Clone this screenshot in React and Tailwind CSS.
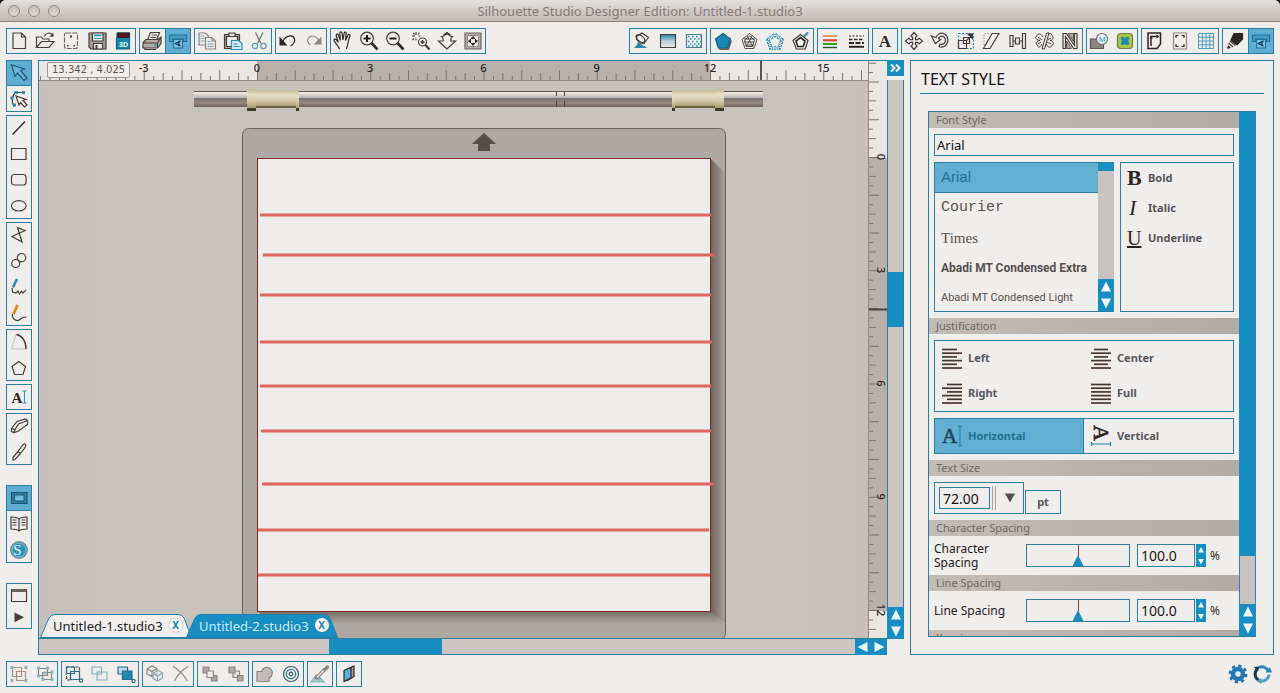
import { useState } from 'react';

const Icon = ({ children }) => (
    <svg viewBox="0 0 26 26" className="size-[26px] block" fill="none" stroke="currentColor" strokeWidth="1.2" aria-hidden="true">
        {children}
    </svg>
);

const BLUE = '#2b8fb4';
const DARK = '#463d3a';

const icons = {
    /* top toolbar */
    newDoc: <Icon><path d="M7 5h8.5l4 4v11.5H7zM15.5 5v4h4" /></Icon>,
    open: <Icon><path d="M4.500 19.500V9h5l1.500 2h6v3M4.500 19.500l5-6H22l-5 6zM12 8.500c2-3.500 6-4.500 8.500-2" /><path d="M21.500 4.500v4.200h-4z" fill={DARK} stroke="none" /></Icon>,
    template: <Icon><rect x="6.500" y="5" width="13" height="15.500" rx="1.500" stroke="#6f6764" strokeDasharray="5 1.2" /><path d="M12 7.500h2v2h-2zM9 17h1.500v1.500H9zM15.500 17H17v1.500h-1.500z" fill={DARK} stroke="none" /></Icon>,
    save: <Icon><path d="M5 5h17v16H7l-2-2z" fill="#a39c98" /><path d="M8.500 5h10.500v8H8.500z" fill="#eef4f5" /><path d="M10 6.500h7.500v1.800H10z" fill={BLUE} stroke="none" /><path d="M10 10.500h7.500" stroke={BLUE} /><path d="M9.500 15.500h9V21h-9z" fill="#eee" /><path d="M11.500 17h2v4h-2z" fill={DARK} stroke="none" /></Icon>,
    sd: <Icon><path d="M7 5h12.500v16H6.500V10L7 9z" fill="#1585ab" stroke="#17617c" /><path d="M8 5h11v4.500H8z" fill="#5d1820" stroke="#3a1c20" /><text x="13.500" y="18.500" fontSize="7" fontWeight="700" textAnchor="middle" fill="#e8fbff" stroke="none" fontFamily="Liberation Sans, sans-serif">3D</text></Icon>,
    print: <Icon><path d="M8.500 12l3-7.500h9l-3 7.500" fill="#f5f3f1" /><path d="M12.500 7h5.500M11.500 9.500h5.500" /><path d="M4 15l3-3.500h12l3-2.500v6.500L18.500 20H4z" fill="#b5aca6" /><path d="M4 15h14.500l3.500-5M18.500 15v5M6 20v1.500h11" /><path d="M15 17.200h3" stroke={BLUE} strokeWidth="1.6" /></Icon>,
    cutter: <Icon><path d="M4.500 7h17v6.500h-3V11h-11v2.500h-3z" fill="#4a9cc2" stroke="#20739a" /><path d="M8.500 11.500h9V20h-9z" fill="#7fc3e2" stroke="#20739a" /><path d="M15.500 12.800L10.500 15.500l5 2.700M14 13.800v3.500" stroke="#123f57" strokeWidth="1.4" /></Icon>,
    copy: <Icon><g stroke="#8d8683"><path d="M5 5h6.500l3 3v9H5z" fill="#eceae8" /><path d="M6.500 8h4M6.500 10.500h6M6.500 13h6" stroke="#86a9b5" /><path d="M11.500 9.500h6.500l3.500 3.500v8h-10z" fill="#eceae8" /><path d="M18 9.500v3.500h3.500" /><path d="M13.500 13.500h3M13.500 16h6M13.500 18.500h6" stroke="#86a9b5" /></g></Icon>,
    paste: <Icon><path d="M4.500 6.500h15v14h-15z" fill="#a9a19c" /><path d="M6.500 8.500h11v10h-11z" fill="#efedec" /><path d="M9 5h6v3.500H9z" fill="#efedec" /><path d="M11.500 12.500h7l3.500 3v6H11.500z" fill="#d4eef5" stroke={BLUE} /><path d="M13.500 16h4M13.500 18.500h6" stroke={BLUE} /></Icon>,
    scissors: <Icon><path d="M9.500 4.500l5.500 11M17 4.500l-5.500 11" stroke="#6f6764" /><circle cx="9" cy="18" r="2.700" stroke="#5d9cb4" /><circle cx="17.500" cy="18" r="2.700" stroke="#5d9cb4" /></Icon>,
    undo: <Icon><path d="M8 13.500c2-6 10-7.500 11.500-2.500.8 3-1.500 5.500-4 7" stroke="#2d2524" /><path d="M4.500 8.500v9h8z" fill="#2d2524" stroke="none" /></Icon>,
    redo: <Icon><path d="M18 13.500c-2-6-9-7-11-3-1.300 3 .5 5 2.500 6.500" stroke="#8d8785" /><path d="M20.500 8.500v8h-8z" fill="#8d8785" stroke="none" /></Icon>,
    hand: <Icon><path d="M9.500 21c-1-3-4.500-6-5.500-8.500-.3-1.500 1.500-1.800 2.300-.7l2 2.700L6.200 7.500c-.3-1.500 1.600-2 2.100-.6l2 5.600L9.800 5c0-1.500 2-1.500 2.200 0l1 7 1.200-7c.3-1.400 2.200-1.100 2 .4l-.7 7.100 2.500-5.500c.7-1.300 2.300-.5 1.900.8-1 3.500-1.700 5.200-2 7.700-.2 2-1 3.500-1.400 5.500" stroke="#2f2928" /></Icon>,
    zoomIn: <Icon><circle cx="11" cy="10.500" r="6.300" /><path d="M15.500 15l6 6.500" strokeWidth="2.600" stroke="#332a28" /><path d="M11 7v7M7.500 10.500h7" strokeWidth="2" stroke="#1f1918" /></Icon>,
    zoomOut: <Icon><circle cx="11" cy="10.500" r="6.300" /><path d="M15.500 15l6 6.500" strokeWidth="2.600" stroke="#332a28" /><path d="M7.500 10.500h7" strokeWidth="2" stroke="#1f1918" /></Icon>,
    zoomArea: <Icon><path d="M8 4v3M4 8h3M5 5l1.500 1.500M12.500 8h-2M8 10.500v2M11.500 4.500L10 6.500M4.500 12L6 10.500" /><circle cx="14.500" cy="14" r="4" /><path d="M14.500 12v4M12.500 14h4" strokeWidth="1.600" /><path d="M17.500 17l4 4.500" strokeWidth="2.200" /></Icon>,
    zoomDrag: <Icon><path d="M13 21l-8.500-8h4.800C9.500 11 9 9.500 7.500 8.500L10 8c1-2.500 5-2.500 6 0l2.500.5c-1.500 1-2 2.500-1.800 4.500h4.800zM9.500 7l3.500-2.500L16.500 7" /></Icon>,
    fit: <Icon><path d="M5 5h16v16H5z" fill="#b5aeaa" stroke="#6d6461" /><path d="M7.500 7.500h11v11h-11z" fill="#efedec" stroke="#8d8683" strokeWidth="1" /><path d="M13 8l2.500 3h-5zM13 18l2.500-3h-5zM8 13l3-2.500v5zM18 13l-3-2.500v5z" fill="#2d2524" stroke="none" /></Icon>,
    fill: <Icon><path d="M7.500 8.500L13 5l6.500 4.500-4.500 6c-3 .5-8-2.500-7.500-7z" /><ellipse cx="11.500" cy="10.500" rx="5" ry="2.800" transform="rotate(40 11.500 10.500)" /><path d="M9 13.500c-.5 3-2 4.500-4 6.500h12.500c.5-1.500-2.500-2-4-2.500-1.500-.8-1.500-2-1.500-3z" fill="#2b86a3" stroke="none" /></Icon>,
    gradient: <Icon><defs><linearGradient id="fillGradient" x1="0" x2="0" y1="0" y2="1"><stop offset="0" stopColor="#1b86ad" /><stop offset="0.5" stopColor="#b9cdd2" /><stop offset="1" stopColor="#eceae8" /></linearGradient></defs><path d="M5.500 6.500h15v13h-15z" fill="url(#fillGradient)" /></Icon>,
    pattern: <Icon><path d="M5.500 6.500h15v13h-15z" stroke="#4b7f92" /><path d="M7 8.500h13M7 13.500h13M7 18h13" stroke={BLUE} strokeWidth="1.600" strokeDasharray="1.600 2.400" /><path d="M9 11h10M9 16h10" stroke={BLUE} strokeWidth="1.600" strokeDasharray="1.600 2.400" /></Icon>,
    pentSolid: <Icon><path d="M14 7l8 6-3 9h-9.500l-3.500-9z" fill="#6c6562" stroke="none" /><path d="M13 5.500l7.500 5.500-2.800 9H8.300L5.500 11z" fill="#1588b5" stroke="#17617c" /></Icon>,
    pentSketch: <Icon><path d="M13.500 5.500l7.500 6-3 9H9l-3-9zM13.500 8l5 4-2 6.500h-6l-2-6.500zM8 11h11M8 14h10M9 17h9M11 8l6 11M16 8l-6 11" strokeWidth="0.900" /></Icon>,
    pentDots: <Icon><path d="M13 6.500l7 5.500-2.700 8H8.700L6 12z" stroke={BLUE} strokeWidth="3.600" strokeDasharray="2.400 1" /><path d="M13 6.500l7 5.500-2.700 8H8.700L6 12z" stroke="#eef3f4" strokeWidth="1.600" strokeDasharray="1.400 2" strokeDashoffset="-0.500" /></Icon>,
    pentPen: <Icon><path d="M12.500 6.500l7.500 6-2.800 8.500H8.300L5 12.500z" /><path d="M12.500 9.500l4.500 3.500-1.700 5.500H9.700L8 13z" fill="#f4f2f1" strokeWidth="1.600" stroke="#2d2524" /><path d="M16 8.500l4-4" stroke={BLUE} strokeWidth="2.200" /></Icon>,
    lineColor: <Icon><path d="M6 8h14" stroke="#d98b3c" strokeWidth="1.600" /><path d="M6 12.300h14" stroke="#d5483d" strokeWidth="2.200" /><path d="M6 16h14" stroke="#28a428" strokeWidth="2" /><path d="M6 19.500h14" stroke="#1f5f27" strokeWidth="1.400" /></Icon>,
    lineStyle: <Icon><g stroke="#2d2524"><path d="M6 8h15" strokeDasharray="2 1.500" /><path d="M6 11.500h15" strokeDasharray="3.500 1.500" strokeWidth="1.600" /><path d="M6 15h15" strokeDasharray="5 1.500" strokeWidth="1.800" /><path d="M6 18.800h15" strokeWidth="2" /></g></Icon>,
    textA: <Icon><text x="13" y="19" textAnchor="middle" fontSize="17" fontWeight="700" fontFamily="Liberation Serif, serif" fill="#2d2524" stroke="none">A</text></Icon>,
    move: <Icon><path d="M13 4.500l3 3.500-1.600 1.200V11.600h2.400L18 10l3.500 3L18 16l-1.200-1.600h-2.400v2.400L16 18l-3 3.500L10 18l1.600-1.200v-2.400H9.200L8 16l-3.500-3L8 10l1.200 1.600h2.400V9.200L10 8z" /></Icon>,
    rotate: <Icon><path d="M9 9.500C10 6 14 4 17.500 6c4 2.300 4.500 8 1.500 11-2 2-4.500 2.500-7 1.700l1-2.500c2 .6 4 0 5-1.800 1.200-2.200.3-5-2-6-2-.8-4 .2-4.600 2.200l2.400.9-5.500 4L4.500 8z" /></Icon>,
    scale: <Icon><path d="M5.500 5.500h15v15h-15z" stroke={BLUE} strokeDasharray="2 1.500" /><path d="M5.500 12.500h8v8h-8zM10.500 9.500h6v6h-6z" stroke={DARK} /><path d="M13 13l6-6M19.500 10.500V6h-4.500z" stroke={DARK} fill={DARK} /></Icon>,
    shear: <Icon><path d="M13 5.500h7L11 20.500H4.500z" /><path d="M13 5.500H5v15" stroke="#a9a3a0" strokeDasharray="1.500 1.500" /></Icon>,
    align: <Icon><path d="M5 7.500h3v11H5zM10.500 10h4v6h-4zM17.500 5.500h3v15h-3zM8 13h2.500M14.500 13h3" /></Icon>,
    replicate: <Icon><path d="M11 21l4.500-16h2.500L13.500 21zM12 9C10 5 6.500 5 6 8c-3 1-1 4 3 4.500C4.500 13 4 16 6.500 17c0 3 3 3 4.500-1M15 16c2 4 5.500 4 6 1 3-1 1-4-2-4.500 3.500-.5 4-3.500 2-4.500 0-2.500-2-3.500-3.500-1M7 9l4 3M7 16l3-2M20 10l-3 1.500M20 16l-4-2" strokeWidth="1" /></Icon>,
    nest: <Icon><path d="M6 5.500h3.500l8 12v-12H20v15h-3.500l-8-12v12H6z" /><path d="M11 5.500h5.500v8zM9.500 13v7.500h5z" fill="#a8a19e" strokeWidth="0.800" /></Icon>,
    modify: <Icon><path d="M4.500 11h13v9.500h-13z" fill="#8d8582" stroke="#5d5552" /><circle cx="16" cy="11" r="5.500" fill="#edf6f8" stroke="#6f6b69" /><text x="16" y="14" textAnchor="middle" fontSize="8" fontFamily="Liberation Sans, sans-serif" fill={BLUE} stroke="none">M</text></Icon>,
    offset: <Icon><rect x="5.500" y="5.500" width="15" height="15" rx="3" fill="#a7c63e" stroke="#6d7f4f" /><path d="M9 9h2.500l1.500 1 1.500-1H17v2.500L16 13l1 1.500V17h-2.500L13 16l-1.500 1H9v-2.500l1-1.500-1-1.500z" fill="#1e88b4" stroke="none" /></Icon>,
    page: <Icon><path d="M7 5h12.500v11L16 20.500H7z" strokeWidth="1.500" stroke="#2d2524" /><path d="M10 18V8.500h6.500" strokeWidth="1.500" stroke="#2d2524" /><path d="M8.500 10.500L10 7.500l2 3zM15.500 6.500l3 2-3 2z" fill="#2d2524" stroke="none" /></Icon>,
    regMarks: <Icon><path d="M6.500 5h13v16h-13z" stroke="#8d8582" /><path d="M9 10V7.500h2.500M14.500 7.500H17V10M9 16v2.500h2.500M14.500 18.500H17V16" stroke="#2d2524" strokeWidth="1.200" /></Icon>,
    grid: <Icon><path d="M5.500 5.500h15v15h-15zM9.300 5.500v15M13 5.500v15M16.800 5.500v15M5.500 9.300h15M5.500 13h15M5.500 16.800h15" stroke="#4b9fbd" strokeWidth="1" /></Icon>,
    blade: <Icon><path d="M12 5.500h8.500V11l-5.500 6-6-5z" fill="#2d2524" stroke="#2d2524" /><path d="M8 13l5.500 4.500M6.500 15l4.500 4" stroke="#4a403c" strokeWidth="1.500" /><path d="M6 17l3 3-4 .8z" fill="#2d2524" stroke="none" /></Icon>,

    /* left toolbar */
    select: <Icon><path d="M5.500 5l3.500 11.500 2.500-3.500 6.500 7.500 3-2.500-6.500-7.500 4-1.500z" stroke="#1f5573" fill="#6db5d6" /></Icon>,
    editPoints: <Icon><path d="M8 21C5 15 6 9 10 6.500h8" stroke={DARK} /><path d="M8.500 5h3.500v3H8.500zM16 5h3v3h-3zM4.500 10.500h3v3h-3zM7 17.500h3v3H7z" fill={BLUE} stroke="none" /><path d="M10 10l3 9 1.500-2.500 4 4.500 2.500-2-4-4.500 3-1z" fill="#f4f2f1" /></Icon>,
    line: <Icon><path d="M6.500 19.500L19 6.500" stroke="#2d2524" strokeWidth="1.400" /></Icon>,
    rect: <Icon><path d="M5.500 7.500h14.500v11H5.500z" /></Icon>,
    roundRect: <Icon><rect x="5.500" y="7.500" width="14.500" height="10.500" rx="2.800" /></Icon>,
    ellipse: <Icon><ellipse cx="12.800" cy="12.800" rx="7.300" ry="5.200" /></Icon>,
    polygon: <Icon><path d="M11.500 5.500l7.500 3L6 14.500l10 5.500z" /></Icon>,
    curve: <Icon><circle cx="15.500" cy="9.700" r="4.200" /><circle cx="9.700" cy="15.500" r="4" /></Icon>,
    freehand: <Icon><path d="M11 5l-4 8.500" stroke={BLUE} strokeWidth="2.600" /><path d="M6 14l.5 4 3.500 1 2-2 1.500 3 2-2.500 1.500 1.500 3-3" stroke={DARK} /></Icon>,
    smooth: <Icon><path d="M11.500 5l-4 9" stroke="#d98a1e" strokeWidth="2.800" /><path d="M6.500 14v3c2 4 5.500 4.500 8 2 1.500-1.500 3-2 6-2" stroke={DARK} /></Icon>,
    arc: <Icon><path d="M10 5.500L5.500 20H20" stroke="#c4bfbc" strokeWidth="1" /><path d="M10.500 5.500C16 6.500 20 12 20 20" strokeWidth="1.500" /></Icon>,
    regPolygon: <Icon><path d="M12.800 6.500l6.700 5-2.500 8h-8.500l-2.500-8z" /></Icon>,
    textTool: <Icon><text x="11" y="18.500" textAnchor="middle" fontSize="15" fontWeight="700" fontFamily="Liberation Serif, serif" fill="#2d2524" stroke="none">A</text><path d="M16.500 7h4M18.500 7v12M16.500 19h4" stroke={BLUE} strokeWidth="1" /></Icon>,
    eraser: <Icon><path d="M5.500 15.500L11 8.500l8.500-2.500 2 1.500v4L12.500 18 8 19.500l-2.500-1zM5.500 15.500l3.500 1 3.500-5.500 9-3.500M9 16.500l-.8 3" /></Icon>,
    knife: <Icon><path d="M19 5c1.500 1 .5 3-1 5l-3.500 4.500-2.500-2L15.500 7.500C16.500 6 18 4.500 19 5zM12 12.500L7 18.500v2.500l2-.5 5.500-6" /></Icon>,
    docView: <Icon><path d="M5.500 7.500h15.500v11H5.500z" fill="#2e7fa6" stroke="#1d5775" /><path d="M8.500 10h9.500v6H8.500z" fill="#77bede" stroke="#1d5775" strokeWidth="1" /></Icon>,
    book: <Icon><path d="M13 8c-2-2-5-2-8-2v12c3 0 6 0 8 2 2-2 5-2 8-2V6c-3 0-6 0-8 2zM13 8v12M6.500 9h4M6.500 11.500h4M6.500 14h4M15.500 9h4M15.500 11.500h4M15.500 14h4" /></Icon>,
    store: <Icon><circle cx="13" cy="13" r="8.300" fill="#2a93b8" stroke="#75848a" /><circle cx="13" cy="13" r="7" stroke="#bfe3ee" strokeWidth="0.600" /><text x="11.500" y="18" textAnchor="middle" fontSize="15" fontFamily="Liberation Serif, serif" fill="#eafaff" stroke="none">S</text></Icon>,
    windowPane: <Icon><path d="M5.500 6.500h15v12h-15z" /><path d="M5.500 7.500h15" strokeWidth="3" stroke="#6b6360" /></Icon>,
    play: <Icon><path d="M8.500 6.500l9.500 4.800-9.500 4.900z" fill="#463d3a" stroke="none" /></Icon>,

    /* bottom toolbar */
    group: <Icon><path d="M6.500 6.500h9v9h-9zM10.500 10.500h9v9h-9z" stroke="#a39389" /><path d="M4.500 5h3v3h-3zM18.500 5h3v3h-3zM4.500 18h3v3h-3zM18.500 18h3v3h-3z" fill="#8fb3be" stroke="none" /></Icon>,
    ungroup: <Icon><path d="M6.500 7.500h9v7h-9zM10.500 11.500h9v7h-9z" stroke="#8d8683" /><path d="M5 5.500h3v3H5zM14 5.500h3v3h-3zM5 13.500h3v3H5zM18.500 9.500h3v3h-3zM9.500 17h3v3h-3zM18.500 17h3v3h-3zM11.500 10.500h3v3h-3z" fill="#8fb3be" stroke="none" /></Icon>,
    selectAll: <Icon><path d="M5.500 6v13h6M5.500 6h13v5" stroke={DARK} strokeDasharray="3 1.500" /><path d="M5.500 6h8v6.500h-8zM9.500 10.500h9v8h-9z" stroke="#276f88" /><circle cx="20" cy="19.500" r="1.700" stroke="#276f88" /></Icon>,
    deselect: <Icon><path d="M5 6h9.500v7H5zM10 11h10v8H10z" fill="#efedec" stroke="#8badb8" /></Icon>,
    invert: <Icon><path d="M5 6h9.500v7H5z" fill="#bcdce6" stroke="#276f88" /><path d="M9.500 10h9.500v8.500H9.500z" fill="#1c8ab4" stroke="#276f88" /><circle cx="20.500" cy="20" r="1.600" stroke="#276f88" /></Icon>,
    duplicate: <Icon><g fill="#efedec" stroke="#8d8683"><path d="M5 8l5-3 5 2.500v5l-5 3-5-2.500zM5 8l5 2.500 5-3M10 10.500v5" /><path d="M11 12.500l5-3 4.500 2.500v5l-5 3-4.500-2.500zM11 12.500l4.500 2.500 5-3M15.500 15v5" stroke="#8ba7b1" /></g></Icon>,
    deleteX: <Icon><path d="M5 5.500c6 3 11 9 14.500 14.500M20 5.500C14 9 9 14.500 6.500 20" stroke="#8d8683" /></Icon>,
    bringFront: <Icon><path d="M6 6h6v6H6zM14.500 14.500h5.500v5.500h-5.500z" fill="#b0a9a5" stroke="#8d8683" /><path d="M10 10h6.500v6.500H10z" fill="#efedec" stroke="#8d8683" /></Icon>,
    sendBack: <Icon><path d="M10 10h6.500v6.500H10z" fill="#e4e1df" stroke="#8d8683" /><path d="M6 6h6v6H6zM14.500 14.500h5.500v5.500h-5.500z" fill="#b0a9a5" stroke="#8d8683" /></Icon>,
    weld: <Icon><path d="M5 10.500h4.500a5.500 5.500 0 1 1 7.500 6.500v3.500H5z" fill="#c3bdb9" stroke="#8d8683" /></Icon>,
    spiral: <Icon><circle cx="13" cy="13" r="7.500" stroke="#37596a" /><circle cx="13" cy="13" r="4.700" stroke="#2d7894" /><circle cx="13" cy="13" r="1.800" stroke="#37596a" /></Icon>,
    eyedropper: <Icon><path d="M4 21l5-7 3 4.500 1-2 4 4.500z" fill="#9ccbdc" stroke="#8badb8" /><path d="M9.500 17l8-8.500M19 7.500l1.500-1.500" stroke="#8d8683" strokeWidth="3.500" strokeLinecap="round" /><path d="M10 16.500l6.500-7" stroke="#e4e1df" strokeWidth="1.400" /></Icon>,
    layers: <Icon><path d="M11.500 8l6.500-3v10.500l-6.500 4z" fill="#a39c98" stroke="#2d2524" /><path d="M8 9.500l7-3v10.500L8 20.500z" fill="#5ab4d8" stroke="#2d2524" /></Icon>,
};

const topLeft = [
    [['New', 'newDoc'], ['Open', 'open'], ['Open template', 'template'], ['Save', 'save'], ['Save to SD card', 'sd']],
    [['Print', 'print'], ['Send to Silhouette', 'cutter', true]],
    [['Copy', 'copy'], ['Paste', 'paste'], ['Cut', 'scissors']],
    [['Undo', 'undo'], ['Redo', 'redo']],
    [['Pan', 'hand'], ['Zoom in', 'zoomIn'], ['Zoom out', 'zoomOut'], ['Zoom selection', 'zoomArea'], ['Drag zoom', 'zoomDrag'], ['Fit to window', 'fit']],
];

const topRight = [
    [['Fill colour', 'fill'], ['Fill gradient', 'gradient'], ['Fill pattern', 'pattern']],
    [['Shadow', 'pentSolid'], ['Sketch', 'pentSketch'], ['Rhinestones', 'pentDots'], ['Trace', 'pentPen']],
    [['Line colour', 'lineColor'], ['Line style', 'lineStyle']],
    [['Text style', 'textA']],
    [['Move', 'move'], ['Rotate', 'rotate'], ['Scale', 'scale'], ['Shear', 'shear'], ['Align', 'align'], ['Replicate', 'replicate'], ['Nesting', 'nest']],
    [['Modify', 'modify'], ['Offset', 'offset']],
    [['Design page settings', 'page'], ['Registration marks', 'regMarks'], ['Grid settings', 'grid']],
    [['Cut settings', 'blade'], ['Cut window', 'cutter', true]],
];

const sideTools = [
    [['Select', 'select', true], ['Edit points', 'editPoints']],
    [['Line', 'line'], ['Rectangle', 'rect'], ['Rounded rectangle', 'roundRect'], ['Ellipse', 'ellipse']],
    [['Polygon', 'polygon'], ['Curve', 'curve'], ['Freehand', 'freehand'], ['Smooth freehand', 'smooth']],
    [['Arc', 'arc'], ['Regular polygon', 'regPolygon']],
    [['Text', 'textTool']],
    [['Eraser', 'eraser'], ['Knife', 'knife']],
];

const viewTools = [[['Drawing area', 'docView', true], ['Library', 'book'], ['Store', 'store']]];

const bottomTools = [
    [['Group', 'group'], ['Ungroup', 'ungroup']],
    [['Select all', 'selectAll'], ['Deselect all', 'deselect'], ['Select by colour', 'invert']],
    [['Duplicate', 'duplicate'], ['Delete', 'deleteX']],
    [['Bring to front', 'bringFront'], ['Send to back', 'sendBack']],
    [['Weld', 'weld'], ['Offset rings', 'spiral']],
    [['Eyedropper', 'eyedropper']],
    [['Layers', 'layers']],
];

const ToolGroups = ({ groups, vertical }) => (
    <div className={vertical ? 'flex flex-col gap-[3px]' : 'flex gap-[3px]'}>
        {groups.map((group) => (
            <div
                key={group[0][0]}
                className={`flex shadow-[inset_0_0_0_1px_#2f7f9b] ${vertical ? 'flex-col' : ''}`}
            >
                {group.map(([label, icon, active]) => (
                    <button
                        key={label}
                        type="button"
                        aria-label={label}
                        className={`size-[26px] text-[#463d3a] ${active ? 'bg-[#5fadd2] shadow-[inset_0_0_0_1px_#2f7f9b]' : ''}`}
                    >
                        {icons[icon]}
                    </button>
                ))}
            </div>
        ))}
    </div>
);

/* ---------- rulers ---------- */
const UNIT = 37.75;

const tickLength = (i) => (i % 4 === 0 ? 10 : i % 2 === 0 ? 7 : 4);

const range = (from, to) => Array.from({ length: to - from + 1 }, (_, i) => from + i);

const TopRuler = () => (
    <div className="h-5 shrink-0 overflow-x-clip bg-[#e9e6e4] border-b border-[#8f8782]">
        <svg width="829" height="19" className="block max-w-none overflow-visible" aria-hidden="true">
            <rect x="218" y="0" width="453" height="19" fill="#b8b0ab" />
            {range(-23, 64).map((i) => (
                <path key={i} d={`M${218.5 + (i * UNIT) / 4} ${19 - tickLength(i)}V19`} stroke="#7b736f" />
            ))}
            {[-3, 0, 3, 6, 9, 12, 15].map((n) => (
                <text key={n} x={218 + n * UNIT} y="11" textAnchor="middle" fontSize="11" fontWeight="500" fill="#2d2624">
                    {n}
                </text>
            ))}
            <path d="M722 0V19" stroke="#5a5350" strokeWidth="2" />
        </svg>
    </div>
);

const SideRuler = () => (
    <div className="w-[19px] shrink-0 overflow-y-clip bg-[#e9e6e4] border-l border-[#8f8782]">
        <svg width="18" height="577" className="block max-w-none overflow-visible" aria-hidden="true">
            <rect x="0" y="97" width="18" height="453" fill="#b8b0ab" />
            {range(-10, 50).map((i) => (
                <path key={i} d={`M0 ${96.5 + (i * UNIT) / 4}H${tickLength(i)}`} stroke="#7b736f" />
            ))}
            {[0, 3, 6, 9, 12].map((n) => (
                <text key={n} transform={`translate(8 ${96 + n * UNIT}) rotate(90)`} textAnchor="middle" fontSize="11" fontWeight="500" fill="#2d2624">
                    {n}
                </text>
            ))}
            <path d="M0 248.500H18" stroke="#4a4340" strokeWidth="2" />
        </svg>
    </div>
);

/* ---------- drawing area ---------- */
const strokes = [
    [221, 672, 134], [224, 676, 174], [221, 672, 214], [221, 673, 261], [221, 672, 305],
    [222, 672, 350], [223, 675, 403], [219, 670, 449], [219, 671, 494],
];

const Roller = ({ x, flip }) => (
    <g transform={flip ? `translate(${x + 52} 0) scale(-1 1)` : `translate(${x} 0)`}>
        <rect x="0" y="26" width="9" height="4" fill="#453a24" />
        <rect x="9" y="9" width="41" height="17" fill="url(#beige)" />
        <rect x="9" y="25" width="41" height="2" fill="#6b5c3c" />
        <rect x="0" y="8" width="9" height="19" fill="url(#beige)" />
        <rect x="49" y="9" width="3" height="19" fill="url(#beige)" />
        <rect x="49" y="27" width="3" height="3" fill="#453a24" />
    </g>
);

const Workspace = () => (
    <svg width="829" height="557" className="block max-w-none" role="img" aria-label="Cutting mat with page">
        <defs>
            <linearGradient id="rod" x1="0" x2="0" y1="0" y2="1">
                <stop offset="0" stopColor="#5d5551" />
                <stop offset="0.08" stopColor="#5d5551" />
                <stop offset="0.09" stopColor="#efecea" />
                <stop offset="0.3" stopColor="#cfc9c5" />
                <stop offset="0.45" stopColor="#b4aca7" />
                <stop offset="0.47" stopColor="#7c726c" />
                <stop offset="0.75" stopColor="#95897f" />
                <stop offset="1" stopColor="#6a605a" />
            </linearGradient>
            <linearGradient id="beige" x1="0" x2="0" y1="0" y2="1">
                <stop offset="0" stopColor="#c4b797" />
                <stop offset="0.3" stopColor="#e9dfc4" />
                <stop offset="0.65" stopColor="#d3c6a6" />
                <stop offset="1" stopColor="#a89873" />
            </linearGradient>
            <linearGradient id="shadeRight" x1="0" x2="1">
                <stop offset="0" stopColor="#6f655f" />
                <stop offset="1" stopColor="#a79f99" />
            </linearGradient>
            <linearGradient id="shadeBottom" x1="0" x2="0" y1="0" y2="1">
                <stop offset="0" stopColor="#766c66" />
                <stop offset="1" stopColor="#afa7a1" />
            </linearGradient>
            <linearGradient id="canvasTint" x1="0" x2="1">
                <stop offset="0" stopColor="#c8bfbc" />
                <stop offset="0.12" stopColor="#c8c2bd" />
                <stop offset="0.88" stopColor="#c8c2bd" />
                <stop offset="1" stopColor="#c8bfbb" />
            </linearGradient>
        </defs>
        <rect width="829" height="557" fill="url(#canvasTint)" />

        <rect x="155" y="10" width="569" height="16" fill="url(#rod)" />
        <path d="M517.500 11v4M525.500 11v4M517.500 20v6M525.500 20v6" stroke="#4d4541" />
        <Roller x={208} />
        <Roller x={633} flip />

        <rect x="203.500" y="47.500" width="483" height="511" rx="6" fill="#afa7a1" stroke="#6a625d" />
        <path d="M445 52l12 11h-6v7h-12v-7h-6z" fill="#575049" />
        <path d="M672 78l14 14v450l-14-10z" fill="url(#shadeRight)" />
        <path d="M219 530h453l12 13H229z" fill="url(#shadeBottom)" />
        <rect x="218.500" y="77.500" width="453" height="453" fill="#efedeb" stroke="#7d2a24" />
        {strokes.map(([x1, x2, y]) => (
            <path key={y} d={`M${x1} ${y}H${x2}`} stroke="#e0645f" strokeWidth="3" />
        ))}
    </svg>
);

const Tab = ({ name, active, onSelect }) => (
    <div className={`relative flex items-start h-6 w-[152px] ${active ? 'text-[#c9ecfa]' : 'text-[#231f1e]'} last:-ml-1.5`}>
        <svg viewBox="0 0 152 24" className="absolute inset-0 size-full" aria-hidden="true">
            <path
                d="M.5 23.500L9 4Q11 .5 15 .5H138Q142 .5 144 4L151.500 23.500z"
                fill={active ? '#178dc2' : '#f1efee'}
                stroke="#1c7fae"
            />
        </svg>
        <button type="button" onClick={onSelect} className="relative pl-[13px] text-[13px] leading-6 whitespace-nowrap">
            {name}
        </button>
        <button
            type="button"
            aria-label={`Close ${name}`}
            className="relative ml-1.5 mt-1 size-3.5 rounded-full bg-[#f6f5f4] text-[#1c7fae] text-[10px] leading-[14px] font-bold shadow-[0_0_1px_#777]"
        >
            X
        </button>
    </div>
);

/* ---------- scroll bars ---------- */
const arrowPaths = {
    up: 'M8 2.500l5 10H3z',
    down: 'M8 13.500l5-10H3z',
    left: 'M2.500 8l10-5v10z',
    right: 'M13.500 8l-10-5v10z',
};

const Arrow = ({ dir }) => (
    <button type="button" aria-label={`Scroll ${dir}`} className="block size-4 shrink-0 bg-[#178dc2]">
        <svg viewBox="0 0 16 16" className="block size-4" fill="#e9f7fc" aria-hidden="true">
            <path d={arrowPaths[dir]} />
        </svg>
    </button>
);

/* ---------- text style panel ---------- */
const SectionTitle = ({ children }) => (
    <h3 className="h-4 shrink-0 pl-[7px] bg-linear-to-r from-[#c4bbb6] to-[#b2aaa5] text-[11px] leading-4 text-[#6f6865]">{children}</h3>
);

const fonts = [
    ['Arial', "font-['Liberation_Sans',sans-serif] text-[15px]"],
    ['Courier', "font-['Liberation_Mono',monospace] text-[15px]"],
    ['Times', "font-['Liberation_Serif',serif] text-[15px]"],
    ['Abadi MT Condensed Extra', "font-['Roboto',sans-serif] text-[12px] font-bold"],
    ['Abadi MT Condensed Light', "font-['Roboto',sans-serif] text-[11px]"],
];

const LINES = [0, 1, 2, 3, 4, 5];
const justifications = [
    ['Left', [[0, 15], [0, 20]]],
    ['Center', [[3, 17], [0, 20]]],
    ['Right', [[5, 20], [0, 20]]],
    ['Full', [[0, 20], [0, 20]]],
];

const SpacingRow = ({ id, label }) => (
    <div className="flex items-center shrink-0 h-[39px] pl-[5px]">
        <label htmlFor={id} className="w-[92px] pr-3 text-[12px] leading-[14px] text-[#1d1918]">{label}</label>
        <input
            type="range"
            aria-label={`${label} slider`}
            defaultValue="50"
            className="w-[104px] h-[23px] appearance-none border border-[#2f7f9b] bg-[linear-gradient(#a5332c,#a5332c)] bg-[length:1px_100%] bg-center bg-no-repeat [&::-webkit-slider-thumb]:appearance-none [&::-webkit-slider-thumb]:size-[11px] [&::-webkit-slider-thumb]:mt-2.5 [&::-webkit-slider-thumb]:bg-[#178dc2] [&::-webkit-slider-thumb]:[clip-path:polygon(50%_0,100%_100%,0_100%)]"
        />
        <input
            id={id}
            type="text"
            defaultValue="100.0"
            className="ml-[7px] w-[58px] h-[23px] pl-[3px] border border-[#2f7f9b] text-[14px] text-[#1d1918]"
        />
        <div className="ml-px flex flex-col w-2.5 h-[23px] bg-[#178dc2]">
            <button type="button" aria-label={`Increase ${label}`} className="flex-1">
                <svg viewBox="0 0 10 11" className="block w-2.5 h-[11px]" fill="#e9f7fc" aria-hidden="true"><path d="M5 3l3 5.500H2z" /></svg>
            </button>
            <button type="button" aria-label={`Decrease ${label}`} className="flex-1">
                <svg viewBox="0 0 10 11" className="block w-2.5 h-[11px]" fill="#e9f7fc" aria-hidden="true"><path d="M5 8.500L2 3h6z" /></svg>
            </button>
        </div>
        <span className="ml-1 text-[12px] text-[#37302e]">%</span>
    </div>
);

const TextStylePanel = () => {
    const [font, setFont] = useState('Arial');

    return (
        <aside className="w-[364px] shrink-0 flex flex-col border border-[#2f7f9b] px-[17px] pb-[17px]">
            <h2 className="-mx-2 h-[33px] shrink-0 pl-px pt-1.5 text-[16px] leading-6 text-[#141110] border-b border-[#2f7f9b]">TEXT STYLE</h2>
            <div className="mt-[17px] flex flex-1 min-h-0 border border-[#2f7f9b] border-r-0">
                <div className="flex-1 min-w-0 flex flex-col overflow-hidden">
                    <SectionTitle>Font Style</SectionTitle>
                    <div className="px-[5px] py-1.5 flex flex-col gap-1.5 shrink-0">
                        <input
                            type="text"
                            aria-label="Font name"
                            value={font}
                            onChange={(e) => setFont(e.target.value)}
                            className="h-[22px] pl-0.5 border border-[#2f7f9b] text-[13px] text-[#141110]"
                        />
                        <div className="flex gap-1.5 h-[150px]">
                            <div className="w-[180px] flex border border-[#2f7f9b] border-r-0">
                                <ul className="flex-1 min-w-0">
                                    {fonts.map(([name, face]) => (
                                        <li key={name}>
                                            <button
                                                type="button"
                                                onClick={() => setFont(name)}
                                                className={`block w-full h-[30px] pl-1.5 text-left whitespace-nowrap ${face} ${font === name ? 'bg-[#63afd4] border-b border-[#2f7f9b] text-[#24718f]' : 'text-[#56504e]'}`}
                                            >
                                                {name}
                                            </button>
                                        </li>
                                    ))}
                                </ul>
                                <div className="w-4 flex flex-col bg-[#c9c3bf]">
                                    <div className="h-2 bg-[#178dc2]" />
                                    <div className="flex-1" />
                                    <Arrow dir="up" />
                                    <Arrow dir="down" />
                                </div>
                            </div>
                            <div className="flex-1 flex flex-col border border-[#2f7f9b] pl-1.5 text-[11px] font-bold text-[#56555a]">
                                <button type="button" className="h-[30px] flex items-center text-left">
                                    <span className="w-[21px] font-['Liberation_Serif',serif] text-[22px] leading-7 text-[#2d2524]">B</span>Bold
                                </button>
                                <button type="button" className="h-[30px] flex items-center text-left">
                                    <span className="w-[21px] pl-0.5 font-['Liberation_Serif',serif] text-[22px] leading-7 font-normal italic text-[#2d2524]">I</span>Italic
                                </button>
                                <button type="button" className="h-[30px] flex items-center text-left">
                                    <span className="w-[21px] font-['Liberation_Serif',serif] text-[20px] leading-7 font-normal underline text-[#2d2524]">U</span>Underline
                                </button>
                            </div>
                        </div>
                    </div>

                    <SectionTitle>Justification</SectionTitle>
                    <div className="px-[5px] py-1.5 flex flex-col gap-1.5 shrink-0 text-[11px] font-bold text-[#56555a]">
                        <div className="grid grid-cols-2 border border-[#2f7f9b]">
                            {justifications.map(([name, spans]) => (
                                <button key={name} type="button" className="h-[35px] pl-[7px] flex items-center gap-1.5">
                                    <svg viewBox="0 0 20 22" className="w-5 h-[22px]" stroke="#463530" strokeWidth="1.700" aria-hidden="true">
                                        {LINES.map((i) => (
                                            <path key={i} d={`M${spans[i % 2][0]} ${1.5 + i * 3.7}H${spans[i % 2][1]}`} />
                                        ))}
                                    </svg>
                                    {name}
                                </button>
                            ))}
                        </div>
                        <div className="grid grid-cols-2 border border-[#2f7f9b]">
                            <button type="button" className="h-[34px] pl-[7px] flex items-center gap-1.5 bg-[#63afd4] border-r border-[#2f7f9b] text-[#24718f]">
                                <svg viewBox="0 0 20 22" className="w-5 h-[22px]" aria-hidden="true">
                                    <text x="7.500" y="18" textAnchor="middle" fontSize="21" fontWeight="400" fontFamily="Liberation Serif, serif" fill="#1f4457" stroke="#1f4457" strokeWidth="0.600">A</text>
                                    <path d="M16 1h4M18 1v20M16 21h4" stroke="#1b7ca5" />
                                </svg>
                                Horizontal
                            </button>
                            <button type="button" className="h-[34px] pl-[7px] flex items-center gap-1.5">
                                <svg viewBox="0 0 20 22" className="w-5 h-[22px] overflow-visible" aria-hidden="true">
                                    <text transform="translate(3 8) rotate(90)" textAnchor="middle" fontSize="22" fontWeight="400" fontFamily="Liberation Serif, serif" fill="#2d2524" stroke="#2d2524" strokeWidth="0.600">A</text>
                                    <path d="M.5 17v4M.5 19h19M19.500 17v4" stroke="#1b7ca5" strokeWidth="1.200" />
                                </svg>
                                Vertical
                            </button>
                        </div>
                    </div>

                    <SectionTitle>Text Size</SectionTitle>
                    <div className="px-[5px] py-1.5 flex items-end gap-px shrink-0">
                        <div className="w-[90px] h-8 flex items-center border border-[#2f7f9b]">
                            <input
                                type="text"
                                aria-label="Text size"
                                defaultValue="72.00"
                                className="ml-1 w-[51px] h-[22px] pl-[3px] border border-[#2f7f9b] text-[14px] text-[#141110]"
                            />
                            <div className="ml-0.5 w-1 h-6 border-x border-[#a9a3a0]" />
                            <button type="button" aria-label="Choose text size" className="flex-1 flex justify-center">
                                <svg viewBox="0 0 10 10" className="size-2.5" fill="#56504c" aria-hidden="true"><path d="M0 .5h10L5 9.500z" /></svg>
                            </button>
                        </div>
                        <button type="button" className="w-9 h-6 border border-[#2f7f9b] text-[11px] font-bold text-[#56555a]">pt</button>
                    </div>

                    <SectionTitle>Character Spacing</SectionTitle>
                    <SpacingRow id="char-spacing" label="Character Spacing" />
                    <SectionTitle>Line Spacing</SectionTitle>
                    <SpacingRow id="line-spacing" label="Line Spacing" />
                    <SectionTitle>Kerning</SectionTitle>
                </div>
                <div className="w-[17px] flex flex-col bg-[#c9c3bf]">
                    <div className="flex-1 bg-[#178dc2]" />
                    <div className="h-12 border-x border-[#178dc2]" />
                    <div className="flex flex-col items-center bg-[#178dc2]">
                        <Arrow dir="up" />
                        <Arrow dir="down" />
                    </div>
                </div>
            </div>
        </aside>
    );
};

export default function App() {
    const [tab, setTab] = useState('Untitled-2.studio3');

    return (
        <div className="bg-black font-['Noto_Sans',sans-serif]">
            <div className="h-screen flex flex-col rounded-t-md overflow-hidden bg-[#f0eeec]">
                <header className="h-[22px] shrink-0 flex items-center bg-linear-to-b from-[#e3e0de] to-[#bfb8b4] border-b border-[#8a8380]">
                    <div className="w-20 pl-2 flex gap-2">
                        {['Close', 'Minimize', 'Zoom'].map((name) => (
                            <button
                                key={name}
                                type="button"
                                aria-label={`${name} window`}
                                className="size-3 rounded-full border border-[#8d8682] bg-linear-to-b from-[#c4bdb9] to-[#dcd8d5]"
                            />
                        ))}
                    </div>
                    <h1 className="flex-1 text-center text-[13px] leading-5 text-[#837b77]">Silhouette Studio Designer Edition: Untitled-1.studio3</h1>
                    <div className="w-20" />
                </header>

                <div className="px-1.5 py-1.5 flex justify-between shrink-0">
                    <ToolGroups groups={topLeft} />
                    <ToolGroups groups={topRight} />
                </div>

                <div className="flex-1 min-h-0 flex gap-1.5 px-1.5">
                    <nav className="flex flex-col gap-5" aria-label="Tools">
                        <ToolGroups groups={sideTools} vertical />
                        <ToolGroups groups={viewTools} vertical />
                        <div className="flex flex-col h-[46px] shadow-[inset_0_0_0_1px_#2f7f9b] text-[#463d3a]">
                            <button type="button" aria-label="Preview" className="h-[23px]">{icons.windowPane}</button>
                            <button type="button" aria-label="Play" className="h-[23px]">{icons.play}</button>
                        </div>
                    </nav>

                    <main className="flex-1 min-w-0 flex">
                        <div className="flex-1 min-w-0 flex flex-col border-l border-t border-[#2f7f9b]">
                            <div className="flex-1 min-h-0 flex">
                                <div className="flex-1 min-w-0 flex flex-col relative bg-[#c8c2bd]">
                                    <TopRuler />
                                    <output className="absolute left-2 top-px h-4 px-1 border border-[#9d9692] rounded-xs bg-[#f0eeec] font-['DejaVu_Sans',sans-serif] text-[10px] leading-[14px] text-[#5c5653]">
                                        13.342 , 4.025
                                    </output>
                                    <div className="flex-1 overflow-hidden">
                                        <Workspace />
                                    </div>
                                    <div className="absolute left-px bottom-0 flex">
                                        {['Untitled-1.studio3', 'Untitled-2.studio3'].map((name) => (
                                            <Tab key={name} name={name} active={tab === name} onSelect={() => setTab(name)} />
                                        ))}
                                    </div>
                                </div>
                                <SideRuler />
                            </div>
                            <div className="h-[17px] shrink-0 flex border-y border-[#2f7f9b] bg-[#cdc6c3]">
                                <div className="ml-[290px] w-[113px] bg-[#178dc2]" />
                                <div className="ml-auto flex">
                                    <Arrow dir="left" />
                                    <Arrow dir="right" />
                                </div>
                            </div>
                        </div>
                        <div className="w-[17px] shrink-0 flex flex-col pb-4">
                            <button type="button" aria-label="Collapse panel" className="h-4 bg-[#178dc2]">
                                <svg viewBox="0 0 17 16" className="block w-[17px] h-4" fill="none" stroke="#e9f7fc" strokeWidth="2" aria-hidden="true">
                                    <path d="M4 4.500l3.500 3.500L4 11.500M9 4.500l3.500 3.500L9 11.500" />
                                </svg>
                            </button>
                            <div className="mt-1 flex-1 flex flex-col border-x border-[#2f7f9b] bg-[#cdc6c3]">
                                <div className="mt-48 h-[55px] bg-[#178dc2]" />
                            </div>
                            <div className="flex flex-col items-center bg-[#178dc2]">
                                <Arrow dir="up" />
                                <Arrow dir="down" />
                            </div>
                        </div>
                    </main>

                    <TextStylePanel />
                </div>

                <footer className="px-1.5 py-1.5 flex justify-between shrink-0">
                    <ToolGroups groups={bottomTools} />
                    <div className="flex">
                        <button type="button" aria-label="Preferences" className="w-6 h-[26px]">
                            <svg viewBox="0 0 24 24" className="size-6" fill="none" aria-hidden="true">
                                <circle cx="12" cy="12" r="8.200" stroke="#1e6fae" strokeWidth="2.400" strokeDasharray="3.220 3.220" />
                                <circle cx="12" cy="12" r="5" stroke="#2478b8" strokeWidth="4.600" />
                            </svg>
                        </button>
                        <button type="button" aria-label="Sync" className="w-6 h-[26px]">
                            <svg viewBox="0 0 24 24" className="size-6" fill="none" strokeWidth="3" aria-hidden="true">
                                <path d="M9 5.500a7 7 0 0 1 9.500 4" stroke="#2b86bd" />
                                <path d="M19 12.500a7 7 0 0 1-9 6.200" stroke="#5a9cb8" />
                                <path d="M8.500 18A7 7 0 0 1 7 7.200" stroke="#1c3d47" />
                                <path d="M15.500 10.500h6.500l-2-5.500z" fill="#2b86bd" />
                                <path d="M11.500 22v-6l-5 3z" fill="#5a9cb8" />
                                <path d="M4 5l5.500-.5-1.500 5z" fill="#1c3d47" />
                            </svg>
                        </button>
                    </div>
                </footer>
            </div>
        </div>
    );
}
